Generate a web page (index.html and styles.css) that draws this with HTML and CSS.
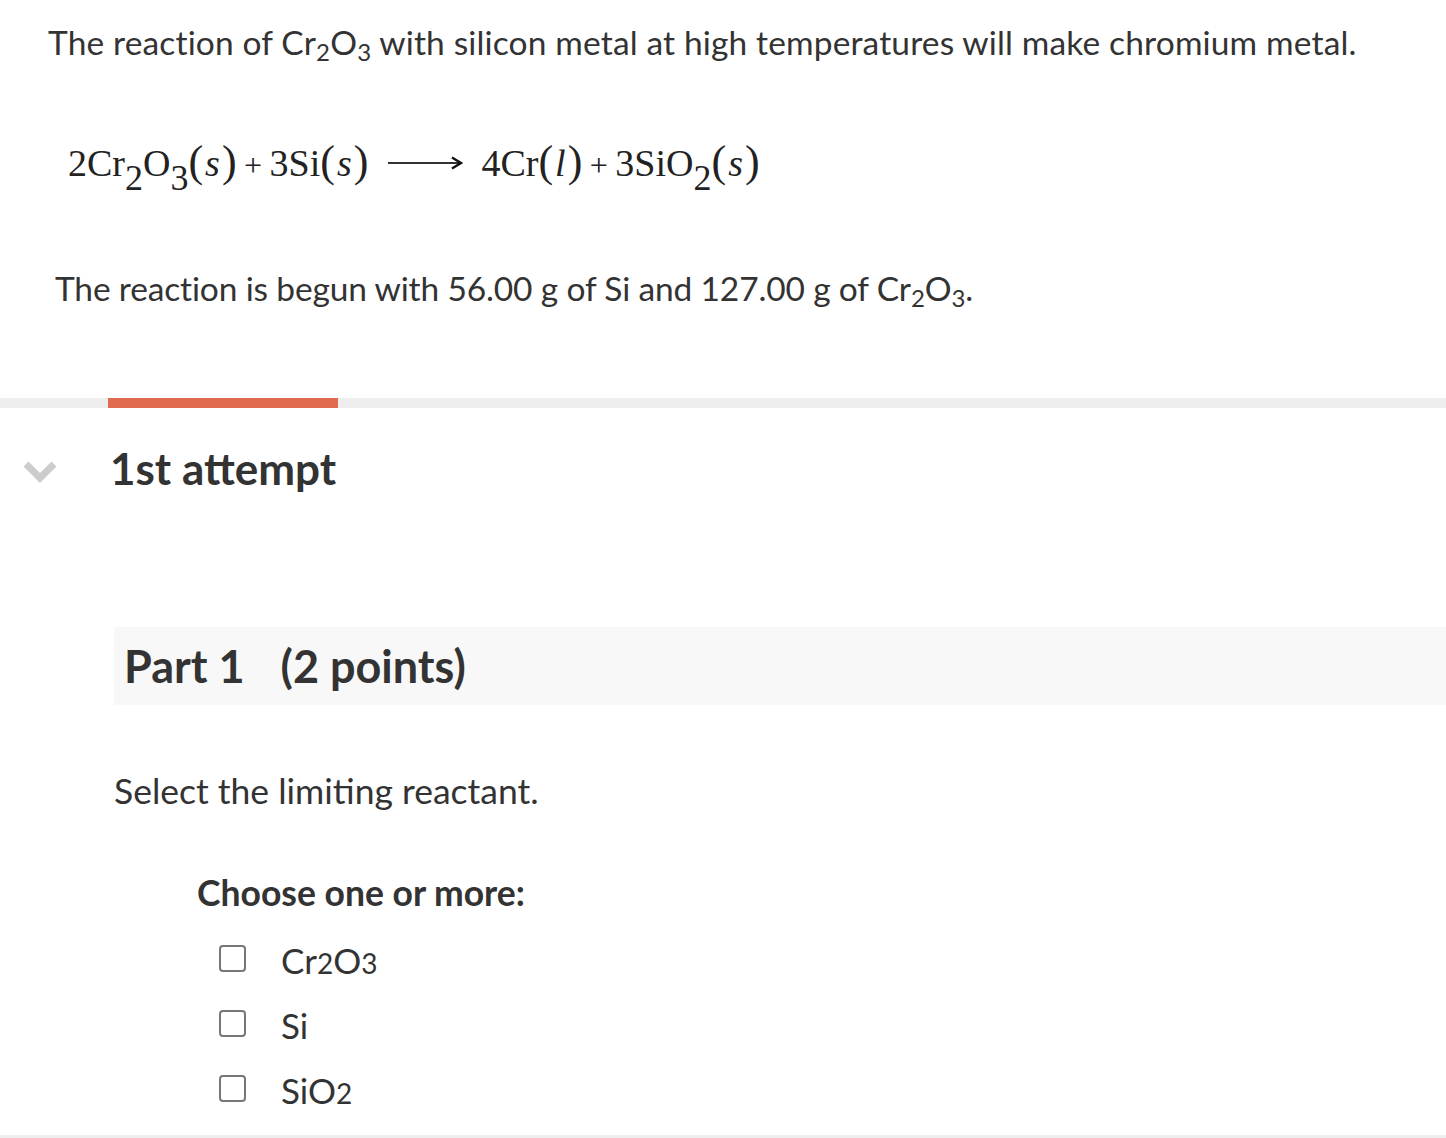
FILE: index.html
```html
<!DOCTYPE html>
<html>
<head>
<meta charset="utf-8">
<link rel="stylesheet" href="styles.css">
</head>
<body>
<div class="question">
  <p class="intro">The reaction of Cr<sub>2</sub>O<sub>3</sub> with silicon metal at high temperatures will make chromium metal.</p>
  <div class="equation">2Cr<sub>2</sub>O<sub>3</sub><span class="paren">(</span><i>s</i><span class="paren">)</span> <span class="op">+</span> 3Si<span class="paren">(</span><i>s</i><span class="paren">)</span> <span class="arrow"><svg width="76" height="14" viewBox="0 0 76 14"><line x1="0" y1="7" x2="72" y2="7" stroke="#333" stroke-width="2.2"/><path d="M64 1.5 L73 7 L64 12.5" fill="none" stroke="#111" stroke-width="2.4"/></svg></span> 4Cr<span class="paren">(</span><i>l</i><span class="paren">)</span> <span class="op">+</span> 3SiO<sub>2</sub><span class="paren">(</span><i>s</i><span class="paren">)</span></div>
  <p class="given">The reaction is begun with 56.00 g of Si and 127.00 g of Cr<sub>2</sub>O<sub>3</sub>.</p>
</div>
<div class="tabs"><div class="tab-active"></div></div>
<div class="attempt">
  <svg class="chevron" width="36" height="26" viewBox="0 0 36 26"><path d="M4 5 L18 19 L32 5" fill="none" stroke="#cccccc" stroke-width="7"/></svg>
  <h2 class="attempt-title">1st attempt</h2>
</div>
<div class="part">
  <div class="part-head"><span class="part-name">Part 1</span><span class="part-points">(2 points)</span></div>
  <p class="prompt">Select the limiting reactant.</p>
  <div class="choices">
    <p class="choose">Choose one or more:</p>
    <label class="choice"><span class="box"></span><span class="label">Cr<small>2</small>O<small>3</small></span></label>
    <label class="choice"><span class="box"></span><span class="label">Si</span></label>
    <label class="choice"><span class="box"></span><span class="label">SiO<small>2</small></span></label>
  </div>
</div>
<div class="bottom-line"></div>
</body>
</html>
```

FILE: styles.css
```css
html, body {
  margin: 0;
  padding: 0;
  background: #ffffff;
}
body {
  font-family: Lato, "Open Sans", sans-serif;
  color: #333333;
  width: 1446px;
  height: 1138px;
  overflow: hidden;
  position: relative;
}
.question {
  padding-top: 20px;
}
.intro {
  margin: 0 0 0 48px;
  font-size: 33.5px;
  line-height: 44px;
  letter-spacing: 0.15px;
  white-space: nowrap;
}
.intro sub, .given sub {
  font-size: 24px;
  vertical-align: -6px;
  line-height: 0;
}
.equation {
  margin: 68px 0 0 68px;
  font-family: "Liberation Serif", "Times New Roman", serif;
  font-size: 38px;
  line-height: 50px;
  color: #222;
  white-space: nowrap;
  word-spacing: -2px;
}
.equation sub {
  font-size: 36px;
  vertical-align: -14px;
  line-height: 0;
}
.equation i {
  font-style: italic;
  padding: 0 2px;
}
.equation .paren {
  font-size: 44px;
}
.equation .op {
  font-size: 32px;
}
.equation .arrow {
  display: inline-block;
  margin: 0 10px 0 12px;
  vertical-align: 6px;
}
.given {
  margin: 76px 0 0 55px;
  font-size: 33.5px;
  line-height: 44px;
  letter-spacing: -0.15px;
  white-space: nowrap;
}
.tabs {
  margin-top: 88px;
  height: 10px;
  background: #eeeeee;
}
.tab-active {
  margin-left: 108px;
  width: 230px;
  height: 10px;
  background: #e06b4d;
}
.attempt {
  display: flex;
  align-items: center;
  margin-top: 37px;
  height: 46px;
}
.chevron {
  margin-left: 22px;
  margin-top: 8px;
}
.attempt-title {
  margin: 0 0 0 52px;
  font-size: 44px;
  font-weight: 700;
  line-height: 46px;
}
.part {
  margin-top: 136px;
  margin-left: 114px;
}
.part-head {
  background: #f8f8f8;
  height: 78px;
  display: flex;
  align-items: center;
  padding-left: 10px;
  font-size: 45px;
  font-weight: 700;
  color: #333;
}
.part-points {
  margin-left: 36px;
}
.prompt {
  margin: 66px 0 0 0;
  font-size: 35.5px;
  line-height: 40px;
}
.choices {
  margin: 62px 0 0 83px;
}
.choose {
  margin: 0 0 14px 0;
  font-size: 35.5px;
  font-weight: 700;
  line-height: 40px;
}
.choice {
  display: flex;
  align-items: center;
  height: 65px;
  margin-left: 22px;
}
.box {
  width: 23px;
  height: 23px;
  border: 2px solid #777777;
  border-radius: 4px;
  margin-top: -2px;
}
.label {
  margin-left: 35px;
  font-size: 35px;
  color: #333;
}
.label small {
  font-size: 28px;
}
.bottom-line {
  position: absolute;
  left: 0;
  right: 0;
  bottom: 0;
  height: 3px;
  background: #eeeeee;
}
```
